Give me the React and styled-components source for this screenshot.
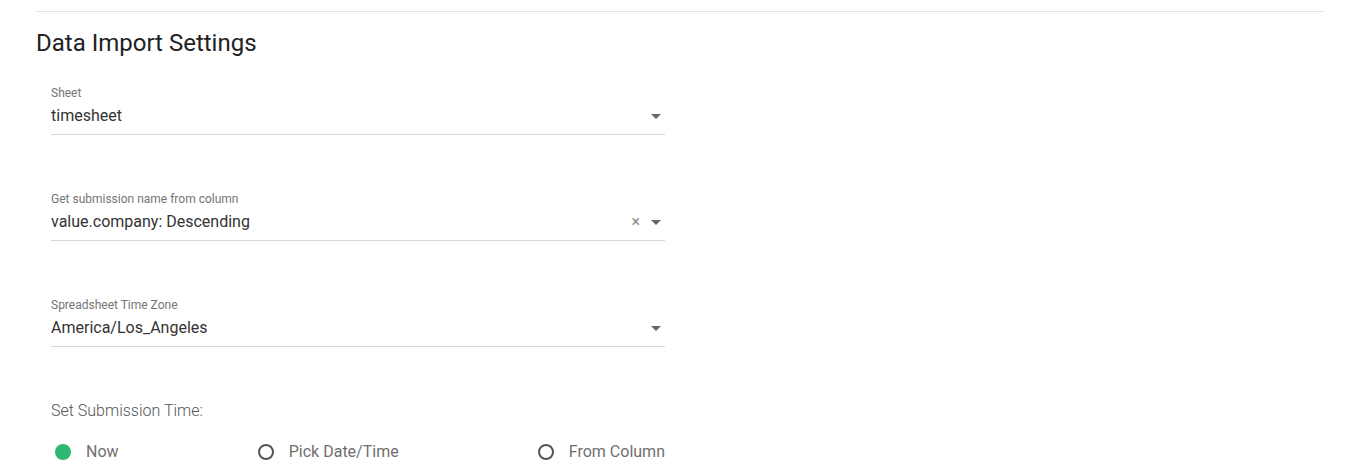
import React, { useState } from "react";
import styled, { createGlobalStyle } from "styled-components";

const GlobalStyle = createGlobalStyle`
  body {
    margin: 0;
    background: #ffffff;
    font-family: Roboto, "Liberation Sans", sans-serif;
  }
`;

const Page = styled.div`
  padding: 11px 29px 0 36px;
`;

const Divider = styled.div`
  height: 1px;
  background: #e3e3e3;
`;

const Title = styled.h2`
  margin: 16px 0 0;
  font-size: 24px;
  line-height: 30px;
  font-weight: 400;
  color: #222;
`;

const Fields = styled.div`
  display: flex;
  flex-direction: column;
  gap: 56px;
  margin: 27px 0 0 15px;
  width: 614px;
`;

const Field = styled.div`
  display: flex;
  flex-direction: column;
`;

const Label = styled.div`
  font-size: 12px;
  line-height: 14px;
  padding-top: 1px;
  margin-bottom: -1px;
  color: #757575;
`;

const SelectRow = styled.div`
  display: flex;
  align-items: center;
  padding: 5px 0 6px;
  border-bottom: 1px solid #d3d8dd;
`;

const Value = styled.div`
  flex: 1;
  font-size: 16px;
  line-height: 24px;
  color: #333;
`;

const Clear = styled.span`
  font-size: 16px;
  line-height: 14px;
  color: #8a8a8a;
  margin-right: 11px;
`;

const Caret = styled.span`
  width: 0;
  height: 0;
  border-left: 5px solid transparent;
  border-right: 5px solid transparent;
  border-top: 5px solid #666;
  margin-right: 4px;
`;

const Section = styled.div`
  margin: 53px 0 0 15px;
  width: 614px;
`;

const SectionLabel = styled.div`
  font-size: 16px;
  line-height: 20px;
  padding-top: 1px;
  font-weight: 300;
  color: #555;
`;

const RadioRow = styled.div`
  display: flex;
  justify-content: space-between;
  margin-top: 21px;
`;

const RadioItem = styled.label`
  display: flex;
  align-items: center;
  gap: 15px;
  padding-left: 4px;
  font-size: 16px;
  line-height: 20px;
  color: #6f6f6f;
  cursor: pointer;
`;

const Dot = styled.span`
  box-sizing: border-box;
  width: 16px;
  height: 16px;
  border-radius: 50%;
  border: ${(p) => (p.checked ? "none" : "2px solid #555")};
  background: ${(p) => (p.checked ? "#2eb872" : "transparent")};
`;

const fields = [
  { label: "Sheet", value: "timesheet" },
  { label: "Get submission name from column", value: "value.company: Descending", clearable: true },
  { label: "Spreadsheet Time Zone", value: "America/Los_Angeles" },
];

const options = ["Now", "Pick Date/Time", "From Column"];

export default function App() {
  const [time, setTime] = useState("Now");
  return (
    <Page>
      <GlobalStyle />
      <Divider />
      <Title>Data Import Settings</Title>
      <Fields>
        {fields.map((f) => (
          <Field key={f.label}>
            <Label>{f.label}</Label>
            <SelectRow>
              <Value>{f.value}</Value>
              {f.clearable && <Clear>×</Clear>}
              <Caret />
            </SelectRow>
          </Field>
        ))}
      </Fields>
      <Section>
        <SectionLabel>Set Submission Time:</SectionLabel>
        <RadioRow>
          {options.map((o) => (
            <RadioItem key={o} onClick={() => setTime(o)}>
              <Dot checked={time === o} />
              {o}
            </RadioItem>
          ))}
        </RadioRow>
      </Section>
    </Page>
  );
}
